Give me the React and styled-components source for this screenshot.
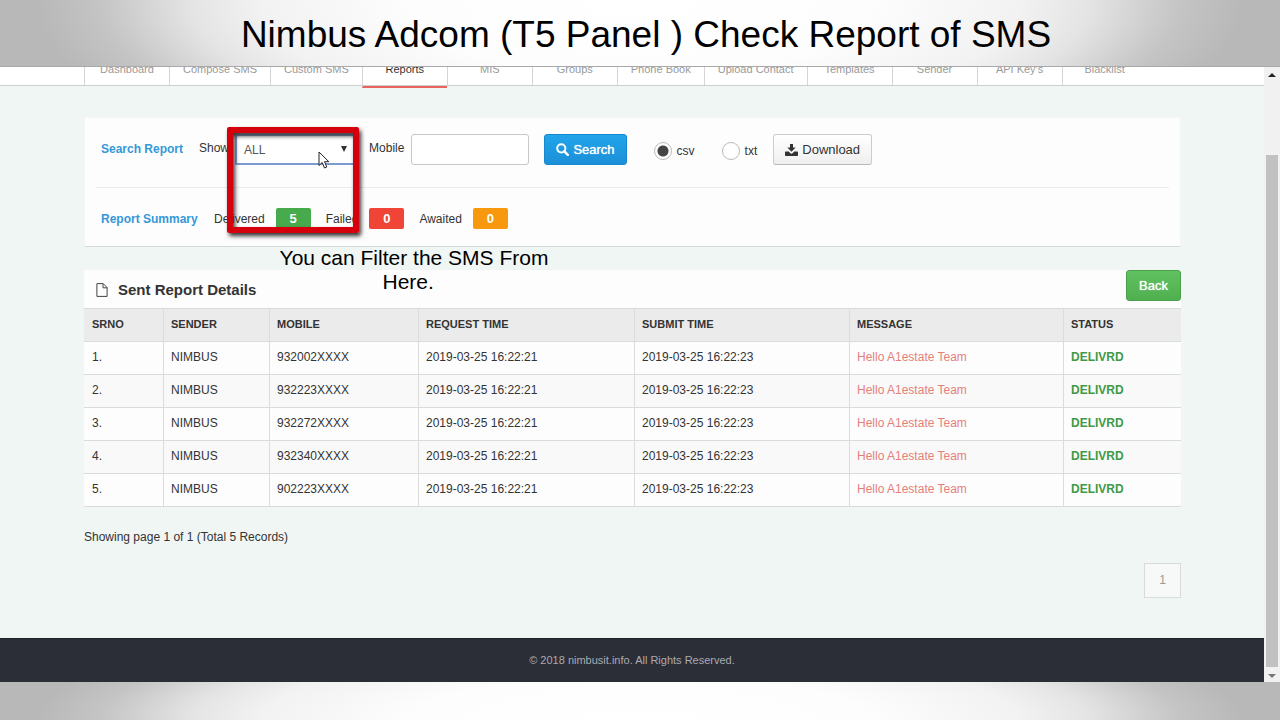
import React from "react";
import styled, { createGlobalStyle, css } from "styled-components";

const GlobalStyle = createGlobalStyle`
  *, *::before, *::after { box-sizing: border-box; }
  body {
    margin: 0;
    background: #f0f6f3;
    color: #333;
    font: 12px/20px "Liberation Sans", Arial, sans-serif;
  }
  button, input, select { font: inherit; margin: 0; }
`;

const Screen = styled.div`
  display: flex;
  flex-direction: column;
  min-height: 100vh;
`;

const Banner = styled.header`
  position: relative;
  z-index: 1;
  display: flex;
  align-items: center;
  justify-content: center;
  height: 67px;
  padding: 3px 0 0 12px;
  border-bottom: 1px solid #a9a9a9;
  background: radial-gradient(ellipse 45% 280% at 50% 0, #fff 0, #fdfdfd 40%, #f2f2f2 66%, #e4e4e4 78%, #c4c4c4 94%, #b8b8b8 105%);
`;

const Title = styled.h1`
  margin: 0;
  color: #000;
  font-size: 37px;
  font-weight: 400;
  line-height: 40px;
  white-space: nowrap;
`;

const BottomBand = styled.div`
  flex: 1;
  min-height: 38px;
  background: radial-gradient(ellipse 45% 280% at 50% 100%, #fff 0, #fdfdfd 40%, #f2f2f2 66%, #e4e4e4 78%, #c4c4c4 94%, #b8b8b8 105%);
`;

const Viewport = styled.div`
  display: flex;
`;

const Page = styled.div`
  flex: 1;
  min-width: 0;
`;

const Nav = styled.nav`
  display: flex;
  align-items: flex-end;
  height: 19px;
  padding: 0 84px;
  background: #fff;
  border-bottom: 1px solid #ccd0ce;
`;

const NavLink = styled.a`
  flex: none;
  min-width: 85px;
  height: ${(p) => (p.$active ? "39px" : "36px")};
  margin-bottom: ${(p) => (p.$active ? "-3px" : "0")};
  padding: 10px 13px 0;
  border-left: 1px solid #d5d5d5;
  border-bottom: ${(p) => (p.$active ? "2px solid #e8645c" : "0")};
  color: ${(p) => (p.$active ? "#333" : "#9a9a9a")};
  font-size: 11px;
  line-height: 20px;
  text-align: center;
  text-decoration: none;
  white-space: nowrap;
`;

const Main = styled.main`
  padding: 31px 83px 40px 84px;
`;

const Card = styled.section`
  background: #fdfdfd;
  border: 1px solid #f4f6f5;
  border-bottom-color: #d6dad8;
  border-radius: 2px;
`;

const SearchCard = styled(Card)`
  margin-bottom: 23px;
  padding: 16px 11px 17px;
`;

const Row = styled.div`
  display: flex;
  align-items: flex-start;
`;

const SearchRow = styled(Row)`
  padding: 0 5px 19px;
  border-bottom: 1px solid #ececec;
`;

const SummaryRow = styled(Row)`
  padding: 20px 5px 0;
`;

const Heading = styled.h2`
  margin: 0;
  padding-top: ${(p) => p.$top || 0}px;
  width: ${(p) => p.$width}px;
  color: #3498d8;
  font-size: 12px;
  font-weight: 700;
  white-space: nowrap;
`;

const Label = styled.label`
  padding-top: 4px;
  white-space: nowrap;
`;

const Select = styled.select`
  width: 120px;
  height: 31px;
  margin: 0 14px 0 6px;
  padding: 0 7px;
  appearance: none;
  border: 2px solid #7b9bd0;
  border-radius: 1px;
  background: #fff;
  color: #555;
`;

const SelectWrap = styled.span`
  position: relative;
  display: flex;
`;

const Arrow = styled.span`
  position: absolute;
  top: 12px;
  right: 22px;
  border: 3px solid transparent;
  border-top: 6px solid #333;
  border-bottom: 0;
  pointer-events: none;
`;

const TextInput = styled.input`
  width: 118px;
  height: 31px;
  margin: 0 15px 0 7px;
  padding: 4px 8px;
  border: 1px solid #c8c8c8;
  border-radius: 3px;
  background: #fff;
`;

const tones = {
  blue: css`
    color: #fff;
    border-color: #1788cc;
    background: linear-gradient(#22a4ea, #1b90d8);
    text-shadow: 0 0 1px #fff;
  `,
  green: css`
    color: #fff;
    border-color: #4a9f4a;
    background: linear-gradient(#60c160, #50b050);
    text-shadow: 0 0 1px #fff;
  `,
  plain: css`
    color: #333;
    border-color: #ccc #ccc #b8b8b8;
    background: linear-gradient(#fff, #efefef);
  `,
};

const Button = styled.button`
  display: flex;
  align-items: center;
  justify-content: center;
  gap: 4px;
  min-width: 55px;
  height: 31px;
  padding: 0 11px;
  border: 1px solid;
  border-radius: 3px;
  font-size: 13px;
  line-height: 20px;
  white-space: nowrap;
  ${(p) => tones[p.$tone]}
`;

const DownloadButton = styled(Button)`
  margin-left: 16px;
`;

const Option = styled.label`
  display: flex;
  align-items: center;
  gap: 5px;
  height: 34px;
  margin-left: 27px;
`;

const Radio = styled.input`
  width: 18px;
  height: 18px;
  appearance: none;
  border: 1px solid #bbb;
  border-radius: 50%;
  background: #fff;
  &:checked { background: radial-gradient(circle, #444 0 5px, #fff 6px); }
`;

const Stat = styled.span`
  display: flex;
  align-items: center;
  gap: 11px;
  margin-right: 15px;
`;

const colors = { green: "#47ab4d", red: "#f04437", orange: "#f7980f" };

const Badge = styled.span`
  width: 35px;
  height: 21px;
  border-radius: 2px;
  background: ${(p) => colors[p.$color]};
  color: #fff;
  font-size: 13px;
  font-weight: 700;
  line-height: 21px;
  text-align: center;
`;

const TableHead = styled.header`
  display: flex;
  align-items: flex-start;
  height: 38px;
`;

const TableTitle = styled.h2`
  display: flex;
  align-items: center;
  gap: 10px;
  flex: 1;
  margin: 0;
  padding: 10px 12px 0;
  font-size: 15px;
  line-height: 20px;
`;

const ReportCard = styled(Card)`
  border-width: 0 0 1px;
`;

const Table = styled.table`
  width: 100%;
  table-layout: fixed;
  border-collapse: separate;
  border-spacing: 0;
  th, td {
    height: 33px;
    padding: 0 7px 2px;
    border-top: 1px solid #d8dcda;
    border-left: 1px solid #dadddb;
    text-align: left;
    white-space: nowrap;
  }
  th:first-child, td:first-child { padding-left: 8px; border-left: 0; }
  th { background: #ebebeb; font-size: 11px; font-weight: 700; }
  tbody tr:nth-child(even) { background: #f9f9f9; }
`;

const Message = styled.td`
  color: #e57f7b;
`;

const Status = styled.td`
  color: #3f9a47;
  font-weight: 700;
`;

const Info = styled.p`
  margin: 20px 0 16px;
`;

const Pager = styled.div`
  display: flex;
  justify-content: flex-end;
`;

const PageLink = styled.a`
  width: 37px;
  height: 35px;
  border: 1px solid #d9dcda;
  background: #f7f9f8;
  color: #999;
  line-height: 33px;
  text-align: center;
  text-decoration: none;
`;

const Footer = styled.footer`
  height: 44px;
  border-top: 1px solid #1f2126;
  background: #2c2e37;
  color: #a9abb0;
  font-size: 11px;
  line-height: 43px;
  text-align: center;
`;

const ScrollBar = styled.div`
  display: flex;
  flex-direction: column;
  align-items: center;
  justify-content: space-between;
  width: 16px;
  padding: 6px 2px 4px;
  background: #f1f1f1;
`;

const Thumb = styled.div`
  flex: 1;
  width: 12px;
  margin: 78px 0 7px;
  background: #c1c1c1;
`;

const ScrollArrow = styled.span`
  border: 4px solid transparent;
  border-top: ${(p) => (p.$up ? "0" : "4px solid #777")};
  border-bottom: ${(p) => (p.$up ? "4px solid #222" : "0")};
`;

const Highlight = styled.div`
  position: absolute;
  z-index: 2;
  top: 127px;
  left: 227px;
  width: 132px;
  height: 106px;
  border: 6px solid #d6000c;
  border-radius: 2px;
  box-shadow: 2px 3px 4px #333, inset 2px 3px 4px #333;
  pointer-events: none;
`;

const Callout = styled.p`
  position: absolute;
  z-index: 2;
  top: 246px;
  left: 264px;
  width: 300px;
  margin: 0;
  color: #000;
  font-size: 21px;
  line-height: 24px;
  text-align: center;
`;

const Cursor = styled.svg`
  position: absolute;
  z-index: 3;
  top: 151px;
  left: 318px;
`;

const navItems = [
  "Dashboard", "Compose SMS", "Custom SMS", "Reports", "MIS", "Groups",
  "Phone Book", "Upload Contact", "Templates", "Sender", "API Key's", "Blacklist",
];

const columns = [
  ["SRNO", 79], ["SENDER", 106], ["MOBILE", 149], ["REQUEST TIME", 216],
  ["SUBMIT TIME", 215], ["MESSAGE", 214], ["STATUS", 118],
];
const totalWidth = columns.reduce((sum, c) => sum + c[1], 0);

const mobiles = ["932002XXXX", "932223XXXX", "932272XXXX", "932340XXXX", "902223XXXX"];

const SearchIcon = () => (
  <svg width="13" height="13" viewBox="0 0 13 13" fill="none" stroke="currentColor" aria-hidden="true">
    <circle cx="5.3" cy="5.3" r="4.1" strokeWidth="2" />
    <path d="M8.4 8.4 11.8 11.8" strokeWidth="2.4" strokeLinecap="round" />
  </svg>
);

const DownloadIcon = () => (
  <svg width="13" height="12" viewBox="0 0 13 12" fill="currentColor" aria-hidden="true">
    <path d="M5 0h3v3.500h2.600L6.500 7.800 2.400 3.500H5z" />
    <path d="M.6 7.600h3.100l1.500 1.500q1.300 1.100 2.600 0l1.500-1.500h3.100q.6 0 .6.6v3q0 .8-.7.8H.7q-.7 0-.7-.7V8.200q0-.6.6-.6z" />
  </svg>
);

const FileIcon = () => (
  <svg width="12" height="14" viewBox="0 0 12 14" fill="none" stroke="#444" aria-hidden="true">
    <path d="M.9.6h6.3l3.9 3.9v8.9H.9zM7 .8v4h4" />
  </svg>
);

export default function App() {
  return (
    <Screen>
      <GlobalStyle />
      <Banner>
        <Title>Nimbus Adcom (T5 Panel ) Check Report of SMS</Title>
      </Banner>
      <Viewport>
        <Page>
          <Nav>
            {navItems.map((name) => (
              <NavLink key={name} href="#" $active={name === "Reports"}>{name}</NavLink>
            ))}
          </Nav>
          <Main>
            <SearchCard>
              <SearchRow>
                <Heading $width={98} $top={5}>Search Report</Heading>
                <Label htmlFor="show">Show</Label>
                <SelectWrap>
                  <Select id="show" defaultValue="ALL"><option>ALL</option></Select>
                  <Arrow />
                </SelectWrap>
                <Label htmlFor="mobile">Mobile</Label>
                <TextInput id="mobile" type="text" />
                <Button type="button" $tone="blue"><SearchIcon />Search</Button>
                <Option><Radio type="radio" name="format" defaultChecked />csv</Option>
                <Option><Radio type="radio" name="format" />txt</Option>
                <DownloadButton type="button" $tone="plain"><DownloadIcon />Download</DownloadButton>
              </SearchRow>
              <SummaryRow>
                <Heading $width={113} $top={1}>Report Summary</Heading>
                <Stat>Delivered<Badge $color="green">5</Badge></Stat>
                <Stat>Failed<Badge $color="red">0</Badge></Stat>
                <Stat>Awaited<Badge $color="orange">0</Badge></Stat>
              </SummaryRow>
            </SearchCard>
            <ReportCard>
              <TableHead>
                <TableTitle><FileIcon />Sent Report Details</TableTitle>
                <Button type="button" $tone="green">Back</Button>
              </TableHead>
              <Table>
                <colgroup>
                  {columns.map(([name, w]) => (
                    <col key={name} style={{ width: `${(w / totalWidth) * 100}%` }} />
                  ))}
                </colgroup>
                <thead>
                  <tr>{columns.map(([name]) => <th key={name} scope="col">{name}</th>)}</tr>
                </thead>
                <tbody>
                  {mobiles.map((mobile, i) => (
                    <tr key={mobile}>
                      <td>{i + 1}.</td>
                      <td>NIMBUS</td>
                      <td>{mobile}</td>
                      <td>2019-03-25 16:22:21</td>
                      <td>2019-03-25 16:22:23</td>
                      <Message>Hello A1estate Team</Message>
                      <Status>DELIVRD</Status>
                    </tr>
                  ))}
                </tbody>
              </Table>
            </ReportCard>
            <Info>Showing page 1 of 1 (Total 5 Records)</Info>
            <Pager><PageLink href="#">1</PageLink></Pager>
          </Main>
          <Footer>© 2018 nimbusit.info. All Rights Reserved.</Footer>
        </Page>
        <ScrollBar aria-hidden="true">
          <ScrollArrow $up />
          <Thumb />
          <ScrollArrow />
        </ScrollBar>
      </Viewport>
      <BottomBand />
      <Highlight />
      <Callout>You can Filter the SMS From Here.{"\u00a0\u00a0"}</Callout>
      <Cursor width="12" height="19" viewBox="0 0 12 19" fill="#fff" stroke="#222" aria-hidden="true">
        <path d="M1 1v13.5l3.2-3 2.3 5.5 2.3-1-2.3-5.3h4.3z" />
      </Cursor>
    </Screen>
  );
}
